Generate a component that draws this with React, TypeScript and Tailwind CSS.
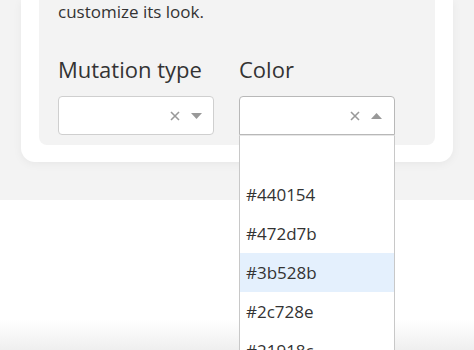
import React from "react";

const options = ["", "#440154", "#472d7b", "#3b528b", "#2c728e", "#21918c"];

function ClearIcon() {
  return (
    <svg width="10" height="10" viewBox="0 0 10 10" className="text-[#999]">
      <path d="M1 1L9 9M9 1L1 9" stroke="currentColor" strokeWidth="1.6" />
    </svg>
  );
}

function Caret({ up }: { up?: boolean }) {
  return (
    <svg width="11" height="6" viewBox="0 0 11 6" className="text-[#999]">
      <path d={up ? "M0 6L5.5 0L11 6Z" : "M0 0L11 0L5.5 6Z"} fill="currentColor" />
    </svg>
  );
}

function SelectBox({ open }: { open?: boolean }) {
  return (
    <div className="relative w-[156px]">
      <div
        className={
          open
            ? "h-[39px] bg-white border border-[#b8b8b8] rounded-t-[4px] flex items-center justify-end gap-[11px] pr-[12px]"
            : "h-[39px] bg-white border border-[#cfcfcf] rounded-[4px] flex items-center justify-end gap-[11px] pr-[11px]"
        }
      >
        <ClearIcon />
        <Caret up={open} />
      </div>
      {open && (
        <div className="absolute left-0 top-[39px] w-[156px] bg-white border-x border-[#c8c8c8] border-t border-t-[#e6e6e6] z-10">
          {options.map((o, i) => (
            <div
              key={i}
              className={
                "h-[39px] flex items-center pl-[6px] text-[17px] text-[#333] " +
                (o === "#3b528b" ? "bg-[#e4f0fd]" : "")
              }
            >
              {o}
            </div>
          ))}
        </div>
      )}
    </div>
  );
}

export default function App() {
  return (
    <div className="w-[474px] h-[350px] overflow-hidden bg-white font-['Open_Sans',sans-serif] text-[#333]">
      <div className="h-[200px] bg-[#f3f3f3] px-[21px] pt-0">
        <div className="bg-white rounded-b-[14px] px-[18px] pb-[17px] shadow-[0_2px_10px_rgba(0,0,0,0.05)]">
          <div className="bg-[#f3f3f3] rounded-b-[8px] px-[19px] pb-[10px]">
            <p className="text-[17px] leading-[24px]">customize its look.</p>
            <div className="mt-[30px] flex gap-[25px]">
              <div className="flex flex-col">
                <label className="text-[22px] leading-[30px]">Mutation type</label>
                <div className="mt-[12px]">
                  <SelectBox />
                </div>
              </div>
              <div className="flex flex-col">
                <label className="text-[22px] leading-[30px]">Color</label>
                <div className="mt-[12px]">
                  <SelectBox open />
                </div>
              </div>
            </div>
          </div>
        </div>
      </div>
      <div className="h-[120px] bg-white" />
      <div className="h-[30px] bg-gradient-to-b from-white to-[#efefef]" />
    </div>
  );
}
